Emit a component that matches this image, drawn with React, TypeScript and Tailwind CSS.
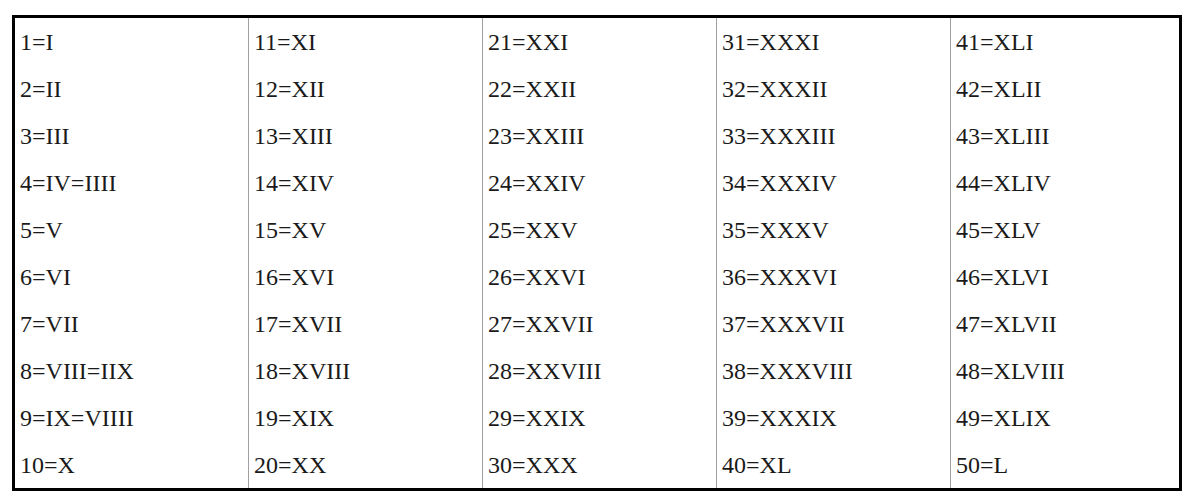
const ROMAN: [number, string][] = [
   [1, "I"],
   [2, "II"],
   [3, "III"],
   [4, "IV=IIII"],
   [5, "V"],
   [6, "VI"],
   [7, "VII"],
   [8, "VIII=IIX"],
   [9, "IX=VIIII"],
   [10, "X"],
];

const TENS = ["", "X", "XX", "XXX", "XL"];

function toRoman(n: number): string {
   const tens = Math.floor((n - 1) / 10);
   const ones = n - tens * 10;
   if (ones === 10) {
      return ["X", "XX", "XXX", "XL", "L"][tens];
   }
   const rest = ROMAN[ones - 1][1];
   if (tens === 0) return rest;
   // only the plain form is shown past the first column
   return TENS[tens] + rest.split("=")[0];
}

function Column(props: { index: number; first: boolean; width: string }) {
   const rows = Array.from({ length: 10 }, (_, i) => props.index * 10 + i + 1);

   return (
      <div
         className={`flex flex-col ${props.width} ${
            props.first ? "" : "border-l border-[#a0a0a0]"
         }`}
      >
         {rows.map((n) => (
            <div key={n} className="flex h-[47px] items-center pt-[1px] pl-[5px]">
               {n}={toRoman(n)}
            </div>
         ))}
      </div>
   );
}

export default function App() {
   return (
      <div className="min-h-[502px] bg-white pt-[15px] pl-[12px]">
         <div
            className="flex w-[1170px] border-[3px] border-black text-[24px] leading-normal text-[#1a1a1a]"
            style={{ fontFamily: '"Liberation Serif", "Times New Roman", serif' }}
         >
            <Column index={0} first width="w-[233px]" />
            <Column index={1} first={false} width="w-[234px]" />
            <Column index={2} first={false} width="w-[234px]" />
            <Column index={3} first={false} width="w-[234px]" />
            <Column index={4} first={false} width="flex-1" />
         </div>
      </div>
   );
}
